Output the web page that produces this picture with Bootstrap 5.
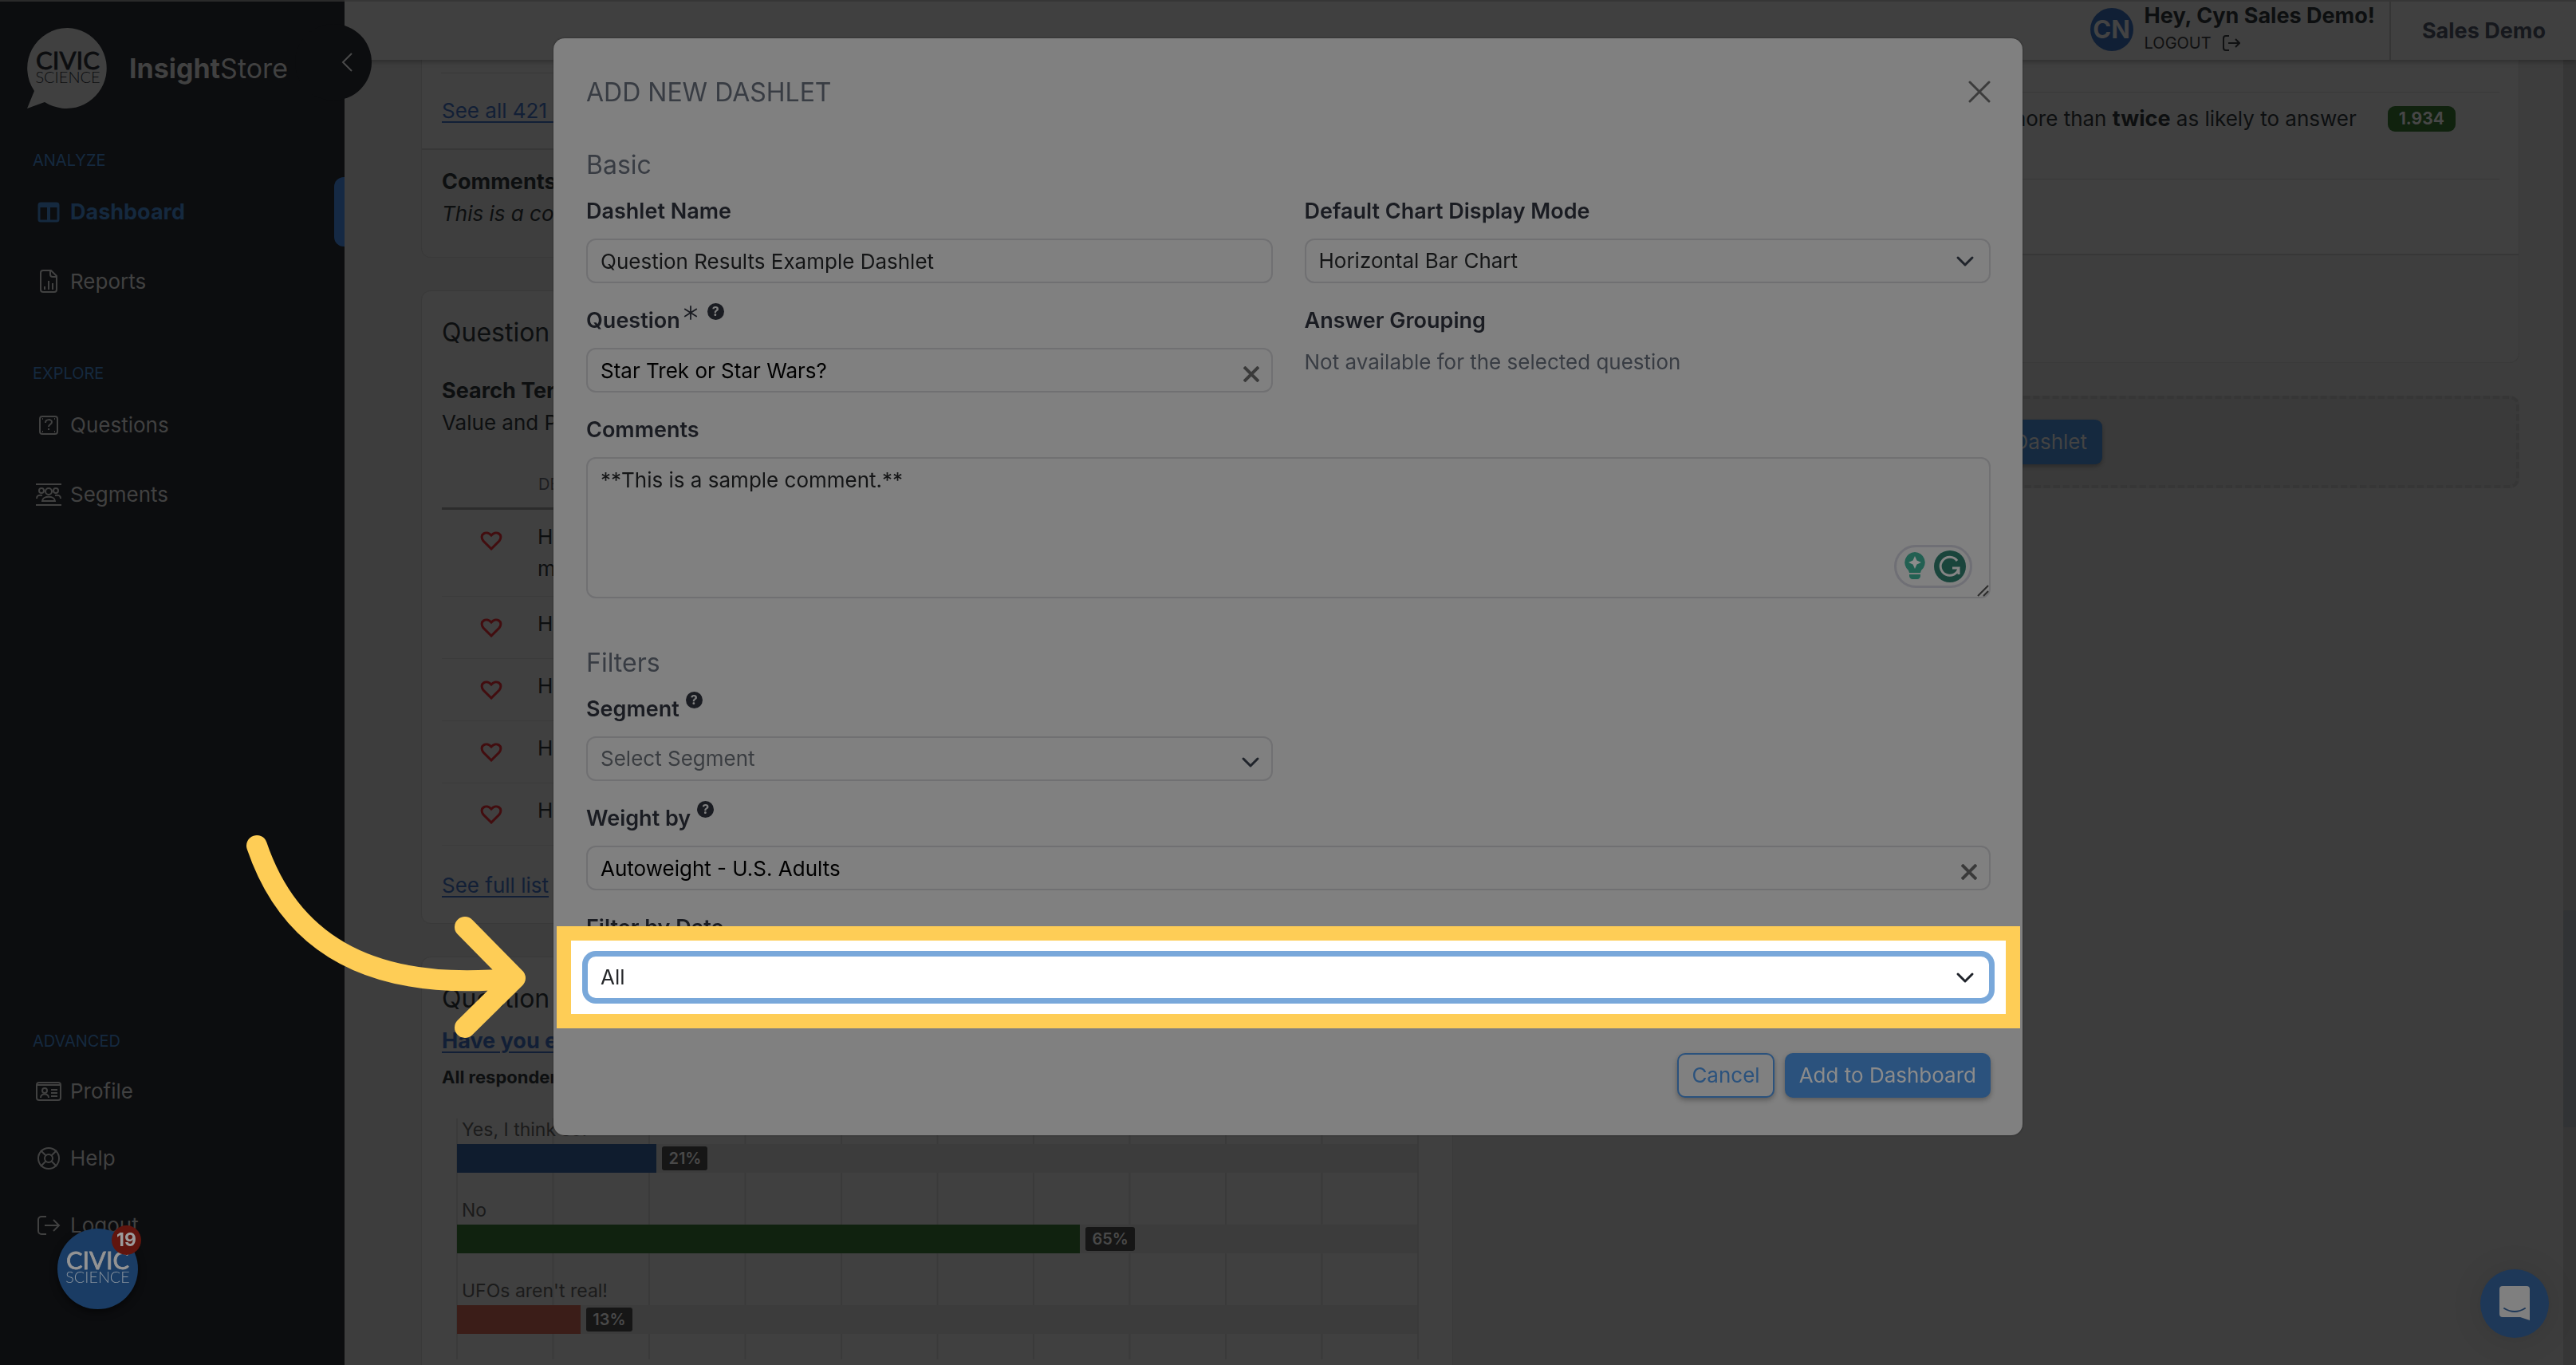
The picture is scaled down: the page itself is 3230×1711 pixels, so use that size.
<!DOCTYPE html>
<html lang="en">
<head>
<meta charset="utf-8">
<meta name="viewport" content="width=device-width, initial-scale=1">
<title>InsightStore Dashboard</title>
<link rel="stylesheet" href="https://cdn.jsdelivr.net/npm/bootstrap@5.3.0/dist/css/bootstrap.min.css">
<style>
:root{--ink:#0d0f10;--side:#0c0d0f;--pane:#404040;--page:#3d3d3d;--hair:#393939;--blue:#15293f;--link:#121f36;--muted:#383c43;--label:#1a1c22;--sun:#fecd56}
body{font-family:Inter,"Liberation Sans",sans-serif;font-size:26px;line-height:40px;color:var(--ink);background:var(--page)}
svg{display:block;flex:none}
a{color:inherit}
b{font-size:27px}
/* sidebar */
.side-nav{width:432px;background:var(--side);color:#414141;border-top:2px solid #2a2a2a;padding:33px 0 133px}
.brand-row{padding-left:34px;gap:26px;height:101px}
.brand-name,.brand-name b{font-size:34px}
.side-head{font-size:20px;line-height:30px;color:var(--blue);padding-left:41px;margin-bottom:6px}
.side-link{height:87px;padding-left:41px;gap:7px;text-decoration:none}
.side-link.tight{height:84px}
.side-link svg{width:40px;height:40px;fill:none;stroke:currentColor;stroke-width:2}
.side-link.current{color:var(--blue);font-weight:700;font-size:27px;position:relative}
.side-link.current::after{content:"";position:absolute;right:0;top:0;width:13px;height:100%;background:#152944;border-radius:12px 0 0 12px}
.gap-analyze{margin-top:50px}.gap-explore{margin-top:57px}
.fold-btn{position:absolute;left:370px;top:30px;width:96px;height:96px;border:0;border-radius:50%;background:var(--side);z-index:5;padding:0 0 0 58px}
/* header */
.top-bar{height:75px;background:var(--pane);border-top:2px solid #363636;box-shadow:0 3px 6px rgba(0,0,0,.25);z-index:3;position:relative}
.user-box{gap:14px;padding:0 18px 3px 0}
.avatar-dot{width:54px;height:54px;border-radius:50%;background:#101f35;color:#434343;font-size:31px}
.who{line-height:34px;font-size:27px}
.who-out{font-size:20px;gap:14px;text-decoration:none;color:#101112}
.org{border-left:2px solid #353535;padding:0 38px 0 39px;color:#16181d;font-size:27px}
/* dashboard */
.board{padding:0 55px 0 96px;gap:43px}
.board-col{flex:1 1 0;min-width:0;gap:41px}
.pane{background:var(--pane);border:1px solid var(--hair);border-radius:12px;flex:none}
.pane.cut{border-top:0;border-top-left-radius:0;border-top-right-radius:0}
.pane-in{padding:27px 25px}
.pane-foot{background:#3e3e3e;border-top:2px solid #373737;padding:20px 25px 34px;border-radius:0 0 12px 12px;white-space:nowrap}
.pane-title{font-size:32px;line-height:50px;margin:0}
.plain-link{color:var(--link);text-decoration:underline;text-underline-offset:4px}
.hair{border-top:1px solid var(--hair)}
.peek{height:16px}
.peek-tall{height:40px}
.room{height:28px}
.list-tbl{width:100%;margin:41px 0 30px}
.list-tbl th{font-size:20px;line-height:30px;font-weight:400;color:#1c1d20;padding-bottom:14px;border-bottom:3px solid #2c2c2c}
.list-tbl td{padding:14px 0;height:78px;vertical-align:top;border-bottom:1px solid #3b3b3b}
.list-tbl .fav{width:120px;padding-left:48px}
.list-tbl .fav svg{margin-top:13px}
.small-bold{font-size:22px;line-height:34px}
.chart-box{margin:35px 17px 0 18px;height:302px;border-right:2px solid #3a3a3a;background:linear-gradient(to right,#3a3a3a 2px,transparent 2px) 0 0/10% 100%;color:#1b1b1b;font-size:23px}
.bar-label{line-height:28px;height:32px;padding-left:7px}
.bar-track{height:36px;background:#3c3c3c;margin:0 0 33px 1px;gap:7px}
.bar-fill{height:100%}
.bar-pct{background:#161616;color:#494949;border-radius:3px;font-size:20px;font-weight:600;line-height:30px;padding:0 8px}
.score{background:#10220e;color:#474747;font-size:21px;line-height:32px;font-weight:700;border-radius:9px;padding:0 14px}
.insight{height:109px;padding:13px 55px 0 0;gap:39px;white-space:nowrap}
.drop-zone{border:4px dashed #363636;border-radius:12px;background:#3a3a3a;padding:26px}
.zone-btn{background:#15293f;color:#434343;border:0;border-radius:9px;height:56px;width:248px;padding:0 19px;box-shadow:0 3px 5px rgba(0,0,0,.25)}
.fake-scroll{width:16px;background:#363636;padding-top:1066px}
.fake-thumb{height:272px;background:#313335;border-radius:2px}
/* modal */
.dash-dialog{max-width:1842px;margin:48px auto}
.dash-sheet{background:#808080;border:0;border-radius:14px;padding:43px 40px 47px 41px;box-shadow:0 0 2px #222}
.sheet-title,.sheet-sub{font-size:32px;line-height:50px;font-weight:400;color:var(--muted);margin:0}
.sheet-title{margin-bottom:41px}
.sheet-sub{margin-bottom:13px}
.sheet-sub.later{margin-top:56px}
.fields{--bs-gutter-x:40px;--bs-gutter-y:27px}
.fld-label{display:flex;gap:8px;font-size:27px;font-weight:600;color:var(--label);margin-bottom:14px;line-height:40px}
.tip{width:21px;height:21px;border-radius:50%;background:var(--label);color:#808080;font-size:16px;line-height:21px;text-align:center;font-weight:700;border:0;padding:0;margin-top:-2px}
.fld-label svg+.tip{margin-left:4px}
.star{width:18px;height:20px;margin-left:-4px}
.fld,.fld:focus{font-size:26px;line-height:40px;height:56px;padding:0 16px;background-color:#808080;border:2px solid #707072;border-radius:12px;color:#141516;box-shadow:none}
.fld.dark{color:#000}
.fld.pick{background-image:url("data:image/svg+xml,%3Csvg xmlns='http://www.w3.org/2000/svg' viewBox='0 0 24 24'%3E%3Cpath d='m3 8 9 9 9-9' fill='none' stroke='%2320242b' stroke-width='3' stroke-linecap='round' stroke-linejoin='round'/%3E%3C/svg%3E");background-size:24px 24px;background-position:right 18px center;padding-right:60px}
.fld.pick.hint{color:#3a3d41;background-position:right 14px top 18px}
textarea.fld,textarea.fld:focus{height:177px;padding-top:7px;resize:none}
.fld.live,.fld.live:focus{background-color:#fff;border-color:#79a8da;box-shadow:0 0 0 5px #79a8da;color:#26282b;position:relative;z-index:2}
.clear-x{position:absolute;right:17px;top:23px;border:0;background:none;padding:0}
.note{color:var(--muted)}
.writer{position:absolute;right:23px;bottom:13px;width:98px;height:54px;border:3px solid #6f6f75;border-radius:27px;padding-left:2px}
.grip{position:absolute;right:2px;bottom:2px}
.spot{position:absolute;top:-18px;bottom:-18px;left:-19px;right:-19px;background:#fff;box-shadow:0 0 0 18px var(--sun)}
.swoop{position:absolute;right:100%;top:-156px;margin-right:54px;z-index:4;overflow:visible}
.act{gap:13px;margin-top:67px}
.act .btn{height:56px;font-size:26px;line-height:40px;padding:0 16px;border-radius:10px;border:2px solid #2b527d;box-shadow:0 3px 6px rgba(0,0,0,.3)}
.btn-hollow{color:#2b527d;background:#808080}
.btn-solid{color:#8b8b8b;background:#2b527d}
/* floating launchers */
.civic-btn{position:fixed;left:72px;bottom:70px;width:101px;height:101px;z-index:1060;border:0;border-radius:50%;background:#1a3c64;padding:0;box-shadow:0 4px 10px rgba(0,0,0,.5)}
.civic-count{position:absolute;top:-4px;right:-4px;width:37px;height:37px;border-radius:50%;background:#60150e;color:#9c9c9c;font-size:23px;line-height:37px;font-weight:700}
.chat-btn{position:fixed;right:34px;bottom:34px;width:86px;height:86px;border:0;border-radius:50%;background:#1e3858;z-index:1060;padding:0;box-shadow:0 2px 40px rgba(0,0,0,.1)}
.logo-a{font:400 31px Lato,"Open Sans",sans-serif}
.logo-b{font:300 20px Lato,"Open Sans",sans-serif}
</style>
</head>
<body class="vh-100 overflow-hidden d-flex">

<nav class="side-nav d-flex flex-column flex-shrink-0 vh-100" aria-label="Main">
  <div class="brand-row d-flex align-items-center">
    <svg width="102" height="102" viewBox="0 0 102 102" role="img" aria-label="Civic Science">
      <path d="M51 0a50.500 50.500 0 1 1-29 93L0 101l9-22A50.500 50.500 0 0 1 51 0z" fill="#404040"/>
      <text class="logo-a" x="51" y="52" text-anchor="middle" fill="#0c0d0f" stroke="#0c0d0f" stroke-width=".8">CIVIC</text>
      <text class="logo-b" x="51" y="69" text-anchor="middle" fill="#0c0d0f">SCIENCE</text>
    </svg>
    <span class="brand-name"><b>Insight</b>Store</span>
  </div>
  <div class="side-head gap-analyze">ANALYZE</div>
  <a class="side-link current d-flex align-items-center" href="#"><svg viewBox="0 0 40 40"><rect x="8" y="9" width="24" height="22" rx="2" stroke-width="3"/><path d="M8 12h24M20 14v16" stroke-width="4"/></svg>Dashboard</a>
  <a class="side-link d-flex align-items-center" href="#"><svg viewBox="0 0 40 40"><path d="M13 6h10l7 7v17a3 3 0 0 1-3 3H13a3 3 0 0 1-3-3V9a3 3 0 0 1 3-3zM22 6v5a3 3 0 0 0 3 3h5M15 30v-4M20 30V19M25 30v-8"/></svg>Reports</a>
  <div class="side-head gap-explore">EXPLORE</div>
  <a class="side-link d-flex align-items-center" href="#"><svg viewBox="0 0 40 40"><rect x="9" y="9" width="22" height="22" rx="3"/><path d="M16 17c0-5 8-5 8-1 0 3-4 3-4 6M20 24v2M12 12h1M27 12h1M12 28h1M27 28h1"/></svg>Questions</a>
  <a class="side-link d-flex align-items-center" href="#"><svg viewBox="0 0 40 40"><path d="M4 7h32M4 33h32"/><circle cx="20" cy="16" r="4"/><circle cx="11" cy="15" r="3"/><circle cx="29" cy="15" r="3"/><path d="M12 28c0-7 16-7 16 0zM5 25c0-4 3-5 7-4M35 25c0-4-3-5-7-4"/></svg>Segments</a>
  <div class="mt-auto">
    <div class="side-head">ADVANCED</div>
    <a class="side-link tight d-flex align-items-center" href="#"><svg viewBox="0 0 40 40"><rect x="5" y="9" width="30" height="22" rx="3"/><path d="M5 12h30M23 18h8M23 22h8M23 26h8M10 28c0-6 10-6 10 0"/><circle cx="15" cy="19" r="3"/></svg>Profile</a>
    <a class="side-link tight d-flex align-items-center" href="#"><svg viewBox="0 0 40 40"><circle cx="20" cy="20" r="13"/><circle cx="20" cy="20" r="5"/><path d="m10 10 7 7M30 10l-7 7M10 30l7-7M30 30l-7-7"/></svg>Help</a>
    <a class="side-link tight d-flex align-items-center" href="#"><svg viewBox="0 0 40 40"><path d="M17 9h-6a4 4 0 0 0-4 4v14a4 4 0 0 0 4 4h6M15 20h18M26 13l7 7-7 7"/></svg>Logout</a>
  </div>
</nav>
<button class="fold-btn" type="button" aria-label="Collapse menu"><svg width="14" height="24" viewBox="0 0 14 24" fill="none" stroke="#4a4a4a" stroke-width="2"><path d="M13 1 2 12l11 11"/></svg></button>

<div class="flex-fill d-flex flex-column vh-100 overflow-hidden">
  <header class="top-bar d-flex justify-content-end flex-shrink-0">
    <div class="user-box d-flex align-items-center">
      <div class="avatar-dot d-flex align-items-center justify-content-center fw-bold">CN</div>
      <div class="who">
        <div class="fw-bold">Hey, Cyn Sales Demo!</div>
        <a class="who-out d-flex align-items-center" href="#">LOGOUT <svg width="22" height="20" viewBox="0 0 22 20" fill="none" stroke="currentColor" stroke-width="2"><path d="M8 1H4a3 3 0 0 0-3 3v12a3 3 0 0 0 3 3h4M7 10h14M16 5l5 5-5 5"/></svg></a>
      </div>
    </div>
    <div class="org d-flex align-items-center fw-bold">Sales Demo</div>
  </header>

  <div class="flex-fill d-flex overflow-hidden">
    <main class="board flex-fill d-flex overflow-hidden">
      <div class="board-col d-flex flex-column">
        <section class="pane cut">
          <div class="px-4"><div class="peek"></div><div class="hair"></div></div>
          <div class="pane-in"><a class="plain-link" href="#">See all 421 results</a></div>
          <div class="pane-foot"><b>Comments</b><br><i>This is a comment.</i></div>
        </section>
        <section class="pane pane-in">
          <h2 class="pane-title fw-normal">Question List</h2>
          <div class="room"></div>
          <b>Search Terms</b><br>Value and Price
          <table class="list-tbl">
            <thead><tr><th></th><th>DESCRIPTION</th></tr></thead>
            <tbody>
              <tr><td class="fav"><svg width="28" height="24" viewBox="0 0 28 24" fill="none" stroke="#420d0f" stroke-width="3"><path d="M14 22 4 12C-2 4 8-2 14 5c6-7 16-1 10 7z"/></svg></td><td>How<br>most</td></tr>
              <tr><td class="fav"><svg width="28" height="24" viewBox="0 0 28 24" fill="none" stroke="#420d0f" stroke-width="3"><path d="M14 22 4 12C-2 4 8-2 14 5c6-7 16-1 10 7z"/></svg></td><td>How</td></tr>
              <tr><td class="fav"><svg width="28" height="24" viewBox="0 0 28 24" fill="none" stroke="#420d0f" stroke-width="3"><path d="M14 22 4 12C-2 4 8-2 14 5c6-7 16-1 10 7z"/></svg></td><td>How</td></tr>
              <tr><td class="fav"><svg width="28" height="24" viewBox="0 0 28 24" fill="none" stroke="#420d0f" stroke-width="3"><path d="M14 22 4 12C-2 4 8-2 14 5c6-7 16-1 10 7z"/></svg></td><td>How</td></tr>
              <tr><td class="fav"><svg width="28" height="24" viewBox="0 0 28 24" fill="none" stroke="#420d0f" stroke-width="3"><path d="M14 22 4 12C-2 4 8-2 14 5c6-7 16-1 10 7z"/></svg></td><td>How</td></tr>
            </tbody>
          </table>
          <a class="plain-link" href="#">See full list</a>
        </section>
        <section class="pane pane-in">
          <h2 class="pane-title fw-normal mb-2">Question Results</h2>
          <a class="plain-link d-block mb-2" href="#"><b>Have you ever seen a UFO?</b></a>
          <div class="small-bold fw-bold">All respondents</div>
          <div class="chart-box">
            <div class="bar-label">Yes, I think so.</div>
            <div class="bar-track d-flex align-items-center"><div class="bar-fill" style="width:20.8%;background:#0f1c2e"></div><span class="bar-pct">21%</span></div>
            <div class="bar-label">No</div>
            <div class="bar-track d-flex align-items-center"><div class="bar-fill" style="width:64.9%;background:#10220f"></div><span class="bar-pct">65%</span></div>
            <div class="bar-label">UFOs aren't real!</div>
            <div class="bar-track d-flex align-items-center"><div class="bar-fill" style="width:12.9%;background:#3b1d18"></div><span class="bar-pct">13%</span></div>
          </div>
        </section>
      </div>
      <div class="board-col d-flex flex-column">
        <section class="pane cut">
          <div class="px-4">
            <div class="peek-tall"></div>
            <div class="insight hair d-flex justify-content-end align-items-start">
              <span>They are more than <b>twice</b> as likely to answer</span><span class="score mt-1">1.934</span>
            </div>
            <div class="hair" style="height:94px"></div>
          </div>
          <div class="pane-foot"><b>Comments</b><br>None</div>
        </section>
        <section class="drop-zone text-center"><button class="zone-btn d-block mx-auto text-end" type="button">New Dashlet</button></section>
      </div>
    </main>
    <div class="fake-scroll flex-shrink-0"><div class="fake-thumb"></div></div>
  </div>
</div>

<div class="modal d-block overflow-hidden" tabindex="-1" role="dialog" aria-labelledby="sheetTitle">
  <div class="modal-dialog dash-dialog">
    <form class="modal-content dash-sheet">
      <div class="d-flex justify-content-between">
        <h1 class="sheet-title" id="sheetTitle">ADD NEW DASHLET</h1>
        <button type="button" class="border-0 bg-transparent p-0 align-self-start mt-2" aria-label="Close"><svg width="28" height="34" viewBox="0 0 28 34" fill="none" stroke="#3c3c3c" stroke-width="3" stroke-linecap="round"><path d="m2 4 24 24M26 4 2 28"/></svg></button>
      </div>
      <h2 class="sheet-sub">Basic</h2>
      <div class="row fields">
        <div class="col-6"><label class="fld-label" for="f1">Dashlet Name</label><input id="f1" class="form-control fld" value="Question Results Example Dashlet"></div>
        <div class="col-6"><label class="fld-label" for="f2">Default Chart Display Mode</label><select id="f2" class="form-select fld pick"><option>Horizontal Bar Chart</option></select></div>
        <div class="col-6"><div class="fld-label"><label for="f3">Question</label><svg class="star" viewBox="0 0 20 20" stroke="#1a1c22" stroke-width="2" stroke-linecap="round"><path d="M10 1v18M2 5l16 10M18 5 2 15"/></svg><button type="button" class="tip" aria-label="Question help">?</button></div>
          <div class="position-relative"><input id="f3" class="form-control fld dark" value="Star Trek or Star Wars?"><button type="button" class="clear-x" aria-label="Clear question"><svg width="20" height="20" viewBox="0 0 20 20" stroke="#3a3a3a" stroke-width="4"><path d="m1 1 18 18M19 1 1 19"/></svg></button></div></div>
        <div class="col-6"><div class="fld-label mb-2 pb-1">Answer Grouping</div><div class="note">Not available for the selected question</div></div>
        <div class="col-12"><label class="fld-label" for="f4">Comments</label>
          <div class="position-relative"><textarea id="f4" class="form-control fld">**This is a sample comment.**</textarea>
            <div class="writer d-flex align-items-center justify-content-center gap-2">
              <svg width="32" height="40" viewBox="0 0 32 40"><path d="M16 2a13 13 0 0 1 8 23l-1 3H9l-1-3a13 13 0 0 1 8-23z" fill="#226052"/><path d="M9 30h14v2c0 2-2 4-4 4h-6c-2 0-4-2-4-4z" fill="#226052"/><path d="m16 7 2.500 5.500L24 15l-5.500 2.500L16 23l-2.500-5.500L8 15l5.500-2.500z" fill="#8c8c8c"/></svg>
              <svg width="40" height="40" viewBox="0 0 40 40"><circle cx="20" cy="20" r="20" fill="#1a453c"/><path d="M29 13a11.500 11.500 0 1 0 2 9h-8M31 22v8" fill="none" stroke="#858585" stroke-width="3"/></svg>
            </div>
            <svg class="grip" width="15" height="15" viewBox="0 0 15 15" stroke="#2c2c2c" stroke-width="2"><path d="M1 14 14 1M8 14l6-6"/></svg></div></div>
      </div>
      <h2 class="sheet-sub later">Filters</h2>
      <div class="row fields">
        <div class="col-6"><div class="fld-label"><label for="f5">Segment</label><button type="button" class="tip" aria-label="Segment help">?</button></div><select id="f5" class="form-select fld pick hint"><option>Select Segment</option></select></div>
        <div class="col-6"></div>
        <div class="col-12"><div class="fld-label"><label for="f6">Weight by</label><button type="button" class="tip" aria-label="Weight help">?</button></div>
          <div class="position-relative"><input id="f6" class="form-control fld dark" value="Autoweight - U.S. Adults"><button type="button" class="clear-x" aria-label="Clear weight"><svg width="20" height="20" viewBox="0 0 20 20" stroke="#3a3a3a" stroke-width="4"><path d="m1 1 18 18M19 1 1 19"/></svg></button></div></div>
        <div class="col-12"><label class="fld-label" for="f7">Filter by Date</label>
          <div class="position-relative"><div class="spot"></div>
            <svg class="swoop" width="372" height="260" viewBox="310 1040 372 260" fill="none" stroke="#fecd56" stroke-width="26" stroke-linecap="round" stroke-linejoin="round"><path d="M323 1059c38 112 130 186 324 166M584 1161l63 64-63 62"/></svg>
            <select id="f7" class="form-select fld pick live"><option>All</option></select></div></div>
      </div>
      <div class="act d-flex justify-content-end"><button type="button" class="btn btn-hollow">Cancel</button><button type="submit" class="btn btn-solid">Add to Dashboard</button></div>
    </form>
  </div>
</div>

<button class="civic-btn" type="button" aria-label="Civic Science, 19 new"><svg width="101" height="101" viewBox="0 0 102 102"><text class="logo-a" x="51" y="52" text-anchor="middle" fill="#949494" stroke="#949494" stroke-width=".8">CIVIC</text><text class="logo-b" x="51" y="69" text-anchor="middle" fill="#8a949e">SCIENCE</text></svg><span class="civic-count">19</span></button>
<button class="chat-btn" type="button" aria-label="Open chat"><svg class="mx-auto" width="40" height="44" viewBox="0 0 40 44"><path d="M5 0h30a4 4 0 0 1 4 4v39l-12-4H5a4 4 0 0 1-4-4V4a4 4 0 0 1 4-4z" fill="#7f7f7f"/><path d="M7 28q13 8 26 0" fill="none" stroke="#1e3858" stroke-width="2" stroke-linecap="round"/></svg></button>

<script src="https://cdn.jsdelivr.net/npm/bootstrap@5.3.0/dist/js/bootstrap.bundle.min.js"></script>
</body>
</html>
